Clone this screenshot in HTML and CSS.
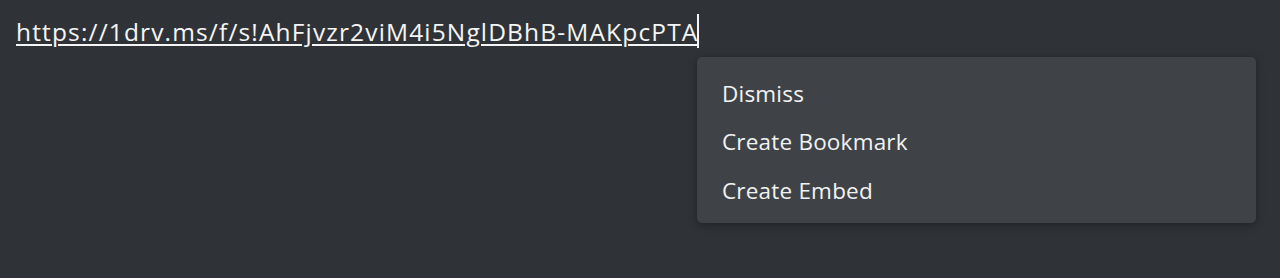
FILE: index.html
```html
<!DOCTYPE html>
<html lang="en">
<head>
    <meta charset="UTF-8">
    <title>Paste link</title>
    <link rel="stylesheet" href="styles.css">
</head>
<body>
    <div class="editor">
        <div class="line">
            <a class="link" href="#">https://1drv.ms/f/s!AhFjvzr2viM4i5NglDBhB-MAKpcPTA</a><span class="caret"></span>
        </div>
        <div class="paste-menu">
            <div class="item">Dismiss</div>
            <div class="item">Create Bookmark</div>
            <div class="item">Create Embed</div>
        </div>
    </div>
</body>
</html>
```

FILE: styles.css
```css
body {
    margin: 0;
    background-color: #2f3337;
    font-family: "Open Sans", "Noto Sans", sans-serif;
    color: #f2f2f2;
    height: 278px;
    overflow: hidden;
}

.editor {
    padding: 14px 16px 0 16px;
}

.line {
    display: flex;
    align-items: center;
    height: 34px;
}

.link {
    color: #f5f5f5;
    font-size: 24.5px;
    letter-spacing: 1.15px;
    text-decoration: underline;
    text-decoration-thickness: 2px;
    text-underline-offset: 3px;
}

.caret {
    width: 2px;
    height: 34px;
    background-color: #f5f5f5;
    margin-left: -1px;
}

.paste-menu {
    margin: 9px 0 0 681px;
    width: 559px;
    padding: 12px 0 8.5px 0;
    background-color: #3f4347;
    border-radius: 5px;
    box-shadow: 0 2px 8px rgba(0, 0, 0, 0.35);
}

.item {
    height: 48.5px;
    display: flex;
    align-items: center;
    padding-left: 25px;
    font-size: 22.5px;
    letter-spacing: 0.2px;
}
```
